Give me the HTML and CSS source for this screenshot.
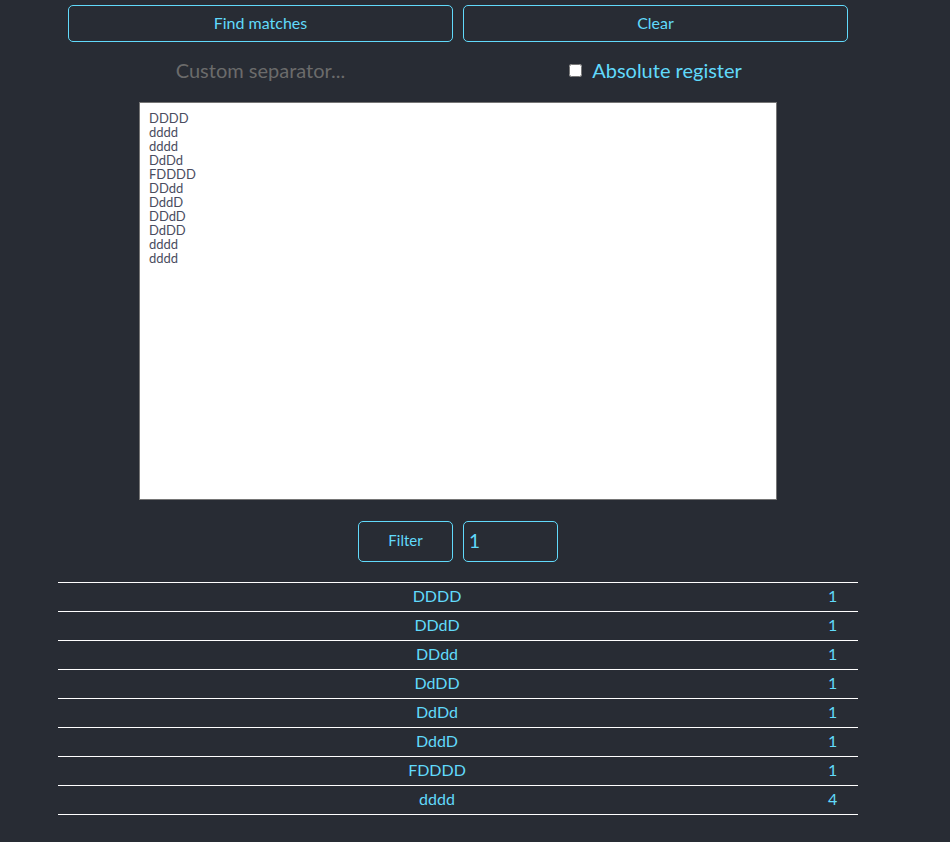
FILE: index.html
```html
<!DOCTYPE html>
<html lang="en">
<head>
<meta charset="utf-8">
<title>Find matches</title>
<link rel="stylesheet" href="styles.css">
</head>
<body>
<div class="app">
  <div class="pair">
    <button class="btn wide">Find matches</button>
    <button class="btn wide">Clear</button>
  </div>
  <div class="pair options">
    <div class="half">
      <input class="separator" type="text" placeholder="Custom separator...">
    </div>
    <div class="half">
      <label class="check"><input type="checkbox"><span>Absolute register</span></label>
    </div>
  </div>
  <textarea class="source">DDDD
dddd
dddd
DdDd
FDDDD
DDdd
DddD
DDdD
DdDD
dddd
dddd</textarea>
  <div class="filter-row">
    <button class="btn small">Filter</button>
    <input class="count-input" type="text" value="1">
  </div>
  <table class="results">
    <tbody>
      <tr><td class="word">DDDD</td><td class="num">1</td></tr>
      <tr><td class="word">DDdD</td><td class="num">1</td></tr>
      <tr><td class="word">DDdd</td><td class="num">1</td></tr>
      <tr><td class="word">DdDD</td><td class="num">1</td></tr>
      <tr><td class="word">DdDd</td><td class="num">1</td></tr>
      <tr><td class="word">DddD</td><td class="num">1</td></tr>
      <tr><td class="word">FDDDD</td><td class="num">1</td></tr>
      <tr><td class="word">dddd</td><td class="num">4</td></tr>
    </tbody>
  </table>
</div>
</body>
</html>
```

FILE: styles.css
```css
html, body {
  margin: 0;
  padding: 0;
  background: #282c34;
}
body {
  font-family: Lato, "Noto Sans", sans-serif;
  color: #61dafb;
}
.app {
  width: 916px;
  padding-top: 5px;
  display: flex;
  flex-direction: column;
  align-items: center;
}
.pair {
  display: flex;
  gap: 10px;
  justify-content: center;
}
.btn {
  background: transparent;
  border: 1px solid #61dafb;
  border-radius: 5px;
  color: #61dafb;
  font-family: inherit;
  cursor: pointer;
  padding: 0 0 3px 0;
}
.btn.wide {
  width: 385px;
  height: 37px;
  font-size: 16px;
}
.options {
  margin-top: 8px;
  height: 40px;
}
.half {
  width: 385px;
  display: flex;
  align-items: center;
  justify-content: center;
}
.separator {
  width: 100%;
  background: transparent;
  border: none;
  outline: none;
  text-align: center;
  font-family: inherit;
  font-size: 20px;
  color: #61dafb;
  padding: 0;
}
.separator::placeholder {
  color: #6b6b6b;
}
.check {
  display: flex;
  align-items: center;
  gap: 10px;
  font-size: 20px;
  color: #61dafb;
}
.check input {
  margin: 0;
  width: 13px;
  height: 13px;
}
.source {
  margin-top: 12px;
  width: 638px;
  height: 398px;
  box-sizing: border-box;
  border: 1px solid #767676;
  background: #ffffff;
  padding: 8px 9px;
  font-family: inherit;
  font-size: 13px;
  line-height: 14px;
  color: #4a4d60;
  resize: none;
}
.filter-row {
  margin-top: 21px;
  display: flex;
  gap: 10px;
  justify-content: center;
}
.btn.small {
  width: 95px;
  height: 41px;
  font-size: 15px;
}
.count-input {
  width: 95px;
  height: 41px;
  box-sizing: border-box;
  background: transparent;
  border: 1px solid #61dafb;
  border-radius: 5px;
  color: #61dafb;
  font-family: inherit;
  font-size: 19px;
  padding: 0 5px 3px 5px;
  outline: none;
}
.results {
  margin-top: 20px;
  width: 800px;
  border-collapse: collapse;
}
.results tr {
  border-top: 1px solid #ffffff;
  border-bottom: 1px solid #ffffff;
}
.results td {
  height: 29px;
  padding: 0 0 3px 0;
  box-sizing: border-box;
  font-size: 16px;
  color: #61dafb;
  vertical-align: middle;
}
.results .word {
  width: 758px;
  text-align: center;
}
.results .num {
  text-align: left;
  padding-left: 12px;
}
```
